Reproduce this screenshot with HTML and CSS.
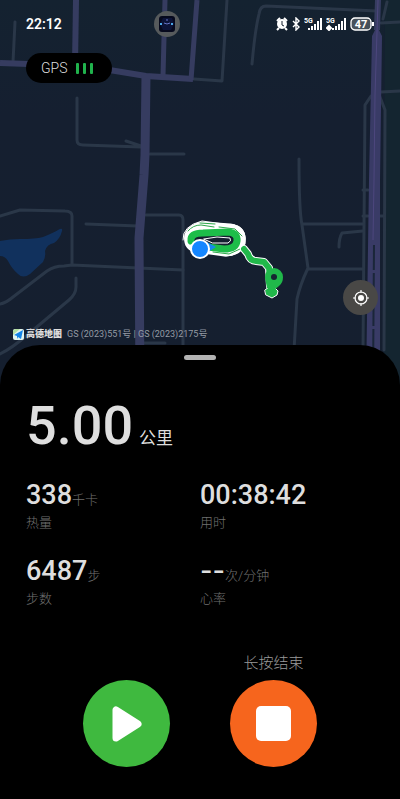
FILE: index.html
```
<!DOCTYPE html>
<html lang="zh-CN">

<head>
    <meta charset="UTF-8">
    <meta name="viewport" content="width=device-width, initial-scale=1.0">
    <title>户外跑步</title>
    <link rel="stylesheet" href="styles.css">
</head>

<body>
    <section class="map">
        <svg class="map-canvas" viewBox="0 0 400 385" preserveAspectRatio="xMidYMin slice" aria-hidden="true">
            <defs>
                <linearGradient id="land" x1="0" y1="0" x2="0" y2="1">
                    <stop offset="0" stop-color="#142230" />
                    <stop offset="0.3" stop-color="#151f30" />
                    <stop offset="1" stop-color="#151f2f" />
                </linearGradient>
            </defs>
            <rect width="400" height="385" fill="url(#land)" />
            <path d="M385 0H400V385H384Z" fill="#142530" />
            <!-- lake -->
            <path d="M0 241Q10 239 20 239Q35 239 43 237Q55 232 58 230Q63 227 62 231Q60 239 54 243Q47 244 45 251Q46 257 43 262L30 274Q23 279 18 274Q12 269 8 261Q5 256 0 256Z" fill="#11315d" />
            <!-- small streets -->
            <g class="street">
                <path d="M15 22L13 62" />
                <path d="M77 98V140Q77 145 83 145L141 147M126 141L141 146M150 154H184" />
                <path d="M227 0L222 81L194 79" />
                <path d="M252 64Q255 30 259 14Q260 6 266 6L377 11M387 2L383 19M381 23L400 22M381 92L400 91" />
                <path d="M371 96L365 105L363 350M380 97L385 110L384 350" />
                <path d="M299 159Q299 210 302 225L308 268Q300 285 297 299L294 350" />
                <path d="M303 224H363M308 269H363M363 231L342 233Q339 238 339 247M363 190H368M380 216H384M363 216H368" />
                <path d="M0 216L20 210L65 211Q72 211 72 216V264" />
                <path d="M0 304Q6 303 13 297L47 271Q54 266 64 266L72 265L183 270" />
                <path d="M86 224L138 226M146 215H179Q183 215 183 220V350M143 343H165" />
                <path d="M76 278V287Q76 294 69 300L26 336Q12 348 0 354" />
            </g>
            <!-- main roads -->
            <g class="road">
                <path d="M76 0L75 65" stroke-width="6" />
                <path d="M0 63L85 66L146 76L193 79" stroke-width="6" />
                <path d="M165 0L163 76M197 0L191 80" stroke-width="5" />
                <path d="M146 75L145 155L144 175L139 238L140 385" stroke-width="9" />
                <path d="M378 0L377 30" stroke-width="6" />
                <path d="M375 30H379L382 36L380 180L380 385H366L369 180L372 36Z" fill="#393b66" stroke="none" />
            </g>
            <path d="M378 0L377 32L375 95L374 180L373 240" fill="none" stroke="#4d477e" />
            <path d="M374 245L373 385" fill="none" stroke="#1a2639" stroke-width="2" stroke-dasharray="25 3" />
            <!-- recorded track -->
            <g fill="none" stroke-linecap="round" stroke-linejoin="round">
                <path d="M189 242Q186 230 202 226L230 228Q242 230 241 241Q240 251 225 252L203 249Q191 249 189 242Z" stroke="#fff" stroke-width="9" />
                <g stroke="#fff" stroke-width="1">
                    <path d="M183 240Q182 226 202 221L238 226Q247 231 245 244Q239 256 226 256L195 248" />
                    <path d="M186 245Q182 229 198 223L235 225Q246 232 243 247Q234 258 220 254L191 251" />
                </g>
                <path d="M191 241Q190 233 203 233L228 232Q238 233 237 241Q236 249 224 249L208 247" stroke="#1dbd49" stroke-width="7" />
                <path d="M188 231Q193 225 201 225L214 227M200 223L215 224M219 227L235 229L242 236M213 252L229 254L240 249" stroke="#2da74a" stroke-width="1" />
                <path d="M204 239L217 237L230 238Q232 241 228 243L213 243Z" fill="#151f30" stroke="#fff" />
                <path d="M244 249L248 254Q250 261 256 261L264 262L269 268L270 286" stroke="#fff" stroke-width="8" />
                <path d="M244 249L248 254Q250 261 256 261L264 262L269 268L271 286" stroke="#21b84a" stroke-width="6" />
                <path d="M265 290L269 287H274L278 291L277 295L272 298L266 295Z" fill="#21b84a" stroke="#fff" stroke-width="1" />
            </g>
            <path d="M274 268a9 9 0 0 1 9 9q0 6-4 9l-5 4l-7-2l-2-10q0-10 9-10Z" fill="#20b84a" />
            <circle cx="274" cy="277" r="3" fill="#162632" />
            <path d="M207 242L216 247L208 252Z" fill="#1689ee" />
            <circle cx="200" cy="249" r="9" fill="#1586ff" stroke="#fff" stroke-width="2" />
        </svg>

        <header class="status-bar">
            <time class="clock">22:12</time>
            <span class="island">
                <svg width="26" height="26" viewBox="0 0 26 26" aria-hidden="true">
                    <circle cx="13" cy="13" r="13" fill="#565a5c" />
                    <rect x="5" y="5" width="16" height="16" rx="3" fill="#06091d" />
                    <path d="M9 7H18L20 13L17 19H9L6 13Z" fill="#0c1338" />
                    <path d="M6 12h2v2H6zM17 12h2v2h-2z" fill="#49a6e8" />
                    <path d="M10 12L13 13L16 12M13 8V10" stroke="#6674c8" fill="none" />
                </svg>
            </span>
            <div class="status-icons">
                <svg width="12" height="14" viewBox="0 0 12 14" aria-hidden="true">
                    <path d="M1 4L4 1M8 1L11 4M3 11L1 13M9 11L11 13" stroke="#fff" stroke-width="2" />
                    <circle cx="6" cy="7" r="5" fill="#fff" />
                    <path d="M6 4V8L8 9" fill="none" stroke="#182331" />
                </svg>
                <svg width="8" height="14" viewBox="0 0 8 14" aria-hidden="true">
                    <path d="M1 4L7 10L4 13V1L7 4L1 10" fill="none" stroke="#fff" stroke-width="1.4" />
                </svg>
                <svg width="18" height="14" viewBox="0 0 18 14">
                    <text class="network" x="0" y="6">5G</text>
                    <path d="M5 13V11M8 13V9M11 13V7M14 13V4M17 13V1" stroke="#fff" stroke-width="2" />
                </svg>
                <svg width="20" height="14" viewBox="0 0 20 14">
                    <text class="network" x="0" y="6">5G</text>
                    <path d="M1 11L3 9L5 11L3 13ZM7 13V11M10 13V9M13 13V7M16 13V4M19 13V1" fill="#fff" stroke="#fff" stroke-width="2" />
                </svg>
                <svg width="24" height="14" viewBox="0 0 24 14">
                    <rect x="1" y="1" width="20" height="12" rx="4" fill="#46505a" stroke="#fff" stroke-width="1.3" />
                    <path d="M23 5V9" stroke="#fff" stroke-width="2" />
                    <text class="charge" x="11" y="11" text-anchor="middle">47</text>
                </svg>
            </div>
        </header>

        <div class="gps">
            <span>GPS</span>
            <span class="gps-bars"><i></i><i></i><i></i></span>
        </div>

        <button class="locate" aria-label="定位">
            <svg width="16" height="16" viewBox="0 0 16 16" aria-hidden="true">
                <circle cx="8" cy="8" r="6" fill="none" stroke="#fff" stroke-width="1.2" />
                <circle cx="8" cy="8" r="3" fill="#fff" />
                <path d="M8 0V3M8 13V16M0 8H3M13 8H16" stroke="#fff" stroke-width="1.2" />
            </svg>
        </button>

        <div class="attribution">
            <svg width="11" height="11" viewBox="0 0 11 11" aria-hidden="true">
                <rect width="11" height="11" rx="2" fill="#e2f5ef" />
                <path d="M0 3Q0 0 3 0H7L0 6Z" fill="#b4dfa1" />
                <path d="M1 6L10 1L8 10L5 8L4 10V7Z" fill="#1384e8" />
            </svg>
            <strong>高德地图</strong>
            <span class="licence">GS (2023)551号 | GS (2023)2175号</span>
        </div>
    </section>

    <main class="sheet">
        <div class="handle"></div>

        <h1 class="distance">5.00 <small>公里</small></h1>

        <dl class="stats">
            <div class="stat">
                <dd>338<small>千卡</small></dd>
                <dt>热量</dt>
            </div>
            <div class="stat">
                <dd>00:38:42</dd>
                <dt>用时</dt>
            </div>
            <div class="stat">
                <dd>6487<small>步</small></dd>
                <dt>步数</dt>
            </div>
            <div class="stat">
                <dd><span class="empty">--</span><small>次/分钟</small></dd>
                <dt>心率</dt>
            </div>
        </dl>

        <div class="actions">
            <button class="round play" aria-label="继续">
                <svg width="30" height="36" viewBox="0 0 30 36" aria-hidden="true">
                    <path d="M4 4V32L26 18Z" fill="#fff" stroke="#fff" stroke-width="7" stroke-linejoin="round" />
                </svg>
            </button>
            <div class="finish">
                <label for="stop">长按结束</label>
                <button class="round stop" id="stop">
                    <svg width="35" height="35" viewBox="0 0 35 35" aria-hidden="true">
                        <rect width="35" height="35" rx="5" fill="#fff" />
                    </svg>
                </button>
            </div>
        </div>
    </main>
</body>

</html>
```
FILE: styles.css
```
* {
    box-sizing: border-box;
}

body {
    margin: 0;
    min-height: 100vh;
    background: #000;
    color: #dedede;
    font-family: Roboto, "Noto Sans CJK SC", sans-serif;
}

button {
    display: flex;
    align-items: center;
    justify-content: center;
    padding: 0;
    border: none;
    border-radius: 50%;
    cursor: pointer;
}

svg {
    display: block;
}

.map {
    position: relative;
    isolation: isolate;
    display: flex;
    flex-direction: column;
    min-height: 385px;
    padding-bottom: 44px;
    overflow: hidden;
    background: #151f2f;
}

.map-canvas {
    position: absolute;
    inset: 0;
    z-index: -1;
    width: 100%;
    height: 100%;
}

.street {
    fill: none;
    stroke: #2a3748;
    stroke-width: 3px;
    stroke-linecap: round;
    stroke-linejoin: round;
}

.road {
    fill: none;
    stroke: #363c60;
    stroke-linejoin: round;
}

.status-bar {
    display: flex;
    align-items: center;
    height: 48px;
    padding: 0 26px;
    color: #fff;
}

.clock {
    flex: 0 0 128px;
    font-size: 14px;
    font-weight: 600;
}

.status-icons {
    display: flex;
    align-items: center;
    gap: 4px;
    margin-left: auto;
}

.network {
    fill: #fff;
    font-size: 7px;
    font-weight: 700;
}

.charge {
    fill: #fff;
    font-size: 11px;
    font-weight: 700;
}

.gps {
    display: flex;
    align-items: center;
    align-self: flex-start;
    gap: 8px;
    height: 30px;
    margin: 5px 0 0 26px;
    padding: 0 19px 0 15px;
    border-radius: 15px;
    background: #000;
    font-size: 14px;
    font-weight: 300;
}

.gps-bars {
    display: flex;
    gap: 4px;
}

.gps-bars i {
    width: 3px;
    height: 11px;
    border-radius: 1px;
    background: #20b34c;
}

.locate {
    align-self: flex-end;
    width: 35px;
    height: 35px;
    margin: auto 22px 12px 0;
    background: #494846;
}

.attribution {
    display: flex;
    align-items: center;
    gap: 2px;
    padding-left: 13px;
    font-size: 9px;
    line-height: 14px;
}

.attribution strong {
    font-weight: 900;
}

.licence {
    margin-left: 3px;
    color: #949ba4;
}

.sheet {
    position: relative;
    margin-top: -40px;
    padding: 10px 26px 32px;
    border-radius: 40px 40px 0 0;
    background: #000;
}

.handle {
    width: 32px;
    height: 5px;
    margin: 0 auto;
    border-radius: 3px;
    background: #b3b3b3;
}

.distance {
    display: flex;
    align-items: baseline;
    gap: 6px;
    height: 56px;
    margin: 38px 0 25px;
    font-size: 54px;
    font-weight: 500;
    line-height: 56px;
}

.distance small {
    font-size: 17px;
    font-weight: 400;
}

.stats {
    display: grid;
    grid-template-columns: 1fr 1fr;
    row-gap: 22px;
    margin: 0;
}

.stat {
    display: flex;
    flex-direction: column;
    gap: 2px;
}

.stat dd {
    display: flex;
    align-items: baseline;
    height: 32px;
    margin: 0;
    font-size: 27px;
    font-weight: 500;
    line-height: 32px;
}

.stat small {
    color: #707070;
    font-size: 13px;
    font-weight: 300;
}

.stat dt {
    color: #707070;
    font-size: 13px;
    font-weight: 300;
    line-height: 20px;
}

.empty {
    font-family: Inter, sans-serif;
}

.actions {
    display: flex;
    align-items: flex-end;
    justify-content: center;
    gap: 60px;
    margin-top: 44px;
}

.finish {
    display: flex;
    flex-direction: column;
    align-items: center;
    gap: 7px;
    color: #999;
    font-size: 15px;
    font-weight: 300;
    line-height: 20px;
}

.round {
    width: 87px;
    height: 87px;
}

.play {
    background: #3fb93f;
}

.stop {
    background: #f6651d;
}
```
